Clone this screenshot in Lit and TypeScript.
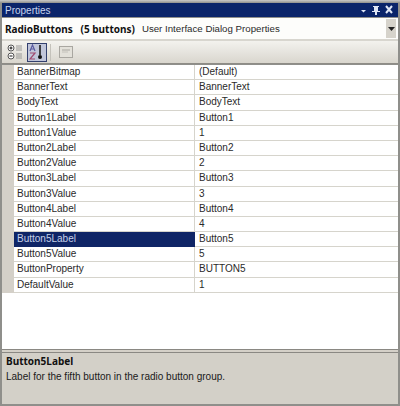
import { LitElement, html, css, svg } from "lit";
import { customElement } from "lit/decorators.js";

const rows: [string, string][] = [
  ["BannerBitmap", "(Default)"],
  ["BannerText", "BannerText"],
  ["BodyText", "BodyText"],
  ["Button1Label", "Button1"],
  ["Button1Value", "1"],
  ["Button2Label", "Button2"],
  ["Button2Value", "2"],
  ["Button3Label", "Button3"],
  ["Button3Value", "3"],
  ["Button4Label", "Button4"],
  ["Button4Value", "4"],
  ["Button5Label", "Button5"],
  ["Button5Value", "5"],
  ["ButtonProperty", "BUTTON5"],
  ["DefaultValue", "1"],
];

@customElement("app-root")
export class AppRoot extends LitElement {
  static styles = css`
    :host {
      display: block;
      width: 400px;
      height: 406px;
      overflow: hidden;
      background: #8f8d88;
      font-family: "Liberation Sans", Arial, sans-serif;
      font-size: 10px;
      color: #2a2a2a;
    }
    .frame {
      height: 406px;
      box-sizing: border-box;
      padding: 3px 2px 2px 2px;
      display: flex;
      flex-direction: column;
      background: linear-gradient(#c9c9c9, #8f8f8b 3px);
    }
    .title {
      height: 14px;
      flex: none;
      background: #0a246a;
      color: #c8d4ee;
      display: flex;
      align-items: center;
      padding: 0 4px 0 3px;
    }
    .title span { flex: 1; }
    .title svg { display: block; }
    .combo {
      height: 23px;
      flex: none;
      background: #fdfdfb;
      border-bottom: 2px solid #d8d6cf;
      box-sizing: border-box;
      margin-top: 1px;
      display: flex;
      align-items: center;
      padding-left: 3px;
      white-space: nowrap;
    }
    .combo b {
      font-family: "Noto Sans", sans-serif;
      font-size: 10px;
      font-weight: 700;
      color: #111;
      margin-right: 7px;
      white-space: pre;
    }
    .combo span { flex: 1; font-size: 9.7px; }
    .drop {
      width: 10px;
      height: 19px;
      background: #d6d3cb;
      display: flex;
      align-items: center;
      justify-content: center;
      margin-right: 2px;
    }
    .toolbar {
      height: 23px;
      flex: none;
      box-sizing: border-box;
      background: linear-gradient(#f3f2ee, #d9d6ce);
      border-bottom: 1px solid #8e8c86;
      display: flex;
      align-items: center;
      gap: 2px;
      padding-left: 3px;
    }
    .tool {
      width: 20px;
      height: 19px;
      display: flex;
      align-items: center;
      justify-content: center;
      box-sizing: border-box;
    }
    .tool.on {
      background: #c1c6da;
      border: 1px solid #33406e;
    }
    .sep {
      width: 1px;
      height: 17px;
      background: #c4c2bb;
      margin: 0 3px 0 1px;
    }
    .body {
      flex: 1;
      background: #fff;
      margin-top: 1px;
      min-height: 0;
    }
    .row {
      height: 15.2px;
      display: grid;
      grid-template-columns: 12px 181px 1fr;
      box-sizing: border-box;
      line-height: 14px;
    }
    .gutter { background: #d4d0c8; }
    .name, .value {
      border-bottom: 1px solid #d6d4cc;
      padding-left: 3px;
      white-space: nowrap;
      overflow: hidden;
    }
    .name { border-right: 1px solid #d6d4cc; }
    .value { padding-left: 4px; }
    .name.sel {
      background: #0f2566;
      color: #c4cfe8;
      border-color: #0f2566;
    }
    .split {
      height: 4px;
      flex: none;
      box-sizing: border-box;
      background: #d4d0c8;
      border-top: 1px solid #8a8883;
      border-bottom: 1px solid #8a8883;
    }
    .desc {
      height: 51px;
      flex: none;
      background: #d3d0c8;
      padding: 1px 4px;
      box-sizing: border-box;
      line-height: 15px;
      color: #1a1a1a;
    }
    .desc b {
      display: block;
      font-family: "Noto Sans", sans-serif;
      font-size: 10px;
      font-weight: 700;
      color: #111;
    }
  `;

  render() {
    return html`
      <div class="frame">
        <div class="title">
          <span>Properties</span>
          <svg width="38" height="12" viewBox="0 0 38 12">
            ${svg`<path d="M5 6h5l-2.500 2.500z" fill="#dfe6f5"/>
            <path d="M17 2h6v1h-1v4h2v1h-3v3h-2V8h-3V7h2V3h-1z" fill="#dfe6f5"/>
            <path d="M30 2l6 7M36 2l-6 7" stroke="#dfe6f5" stroke-width="2" fill="none"/>`}
          </svg>
        </div>
        <div class="combo">
          <b>RadioButtons   (5 buttons)</b>
          <span>User Interface Dialog Properties</span>
          <div class="drop">
            <svg width="7" height="4" viewBox="0 0 7 4"><path d="M0 0h7L3.500 4z" fill="#222"/></svg>
          </div>
        </div>
        <div class="toolbar">
          <div class="tool">
            <svg width="16" height="16" viewBox="0 0 16 16">
              <circle cx="4" cy="4" r="3" fill="#fff" stroke="#555"/>
              <path d="M2.500 4h3M4 2.500v3" stroke="#111"/>
              <circle cx="4" cy="12" r="3" fill="#fff" stroke="#555"/>
              <path d="M2.500 12h3" stroke="#111"/>
              <path d="M9 2h6M9 4h6M9 6h6M9 10h6M9 12h6M9 14h6" stroke="#9a9a98"/>
            </svg>
          </div>
          <div class="tool on">
            <svg width="16" height="16" viewBox="0 0 16 16">
              <path d="M1 7l2.500-6L6 7M2 5h3" stroke="#5a5aa0" fill="none" stroke-width="1.200"/>
              <path d="M1 9h5L1 15h5" stroke="#a04a70" fill="none" stroke-width="1.200"/>
              <path d="M11 1v10" stroke="#111" stroke-width="1.500"/>
              <circle cx="11" cy="13" r="2" fill="#111"/>
            </svg>
          </div>
          <div class="sep"></div>
          <div class="tool">
            <svg width="16" height="16" viewBox="0 0 16 16">
              <rect x="1.500" y="2.500" width="13" height="11" fill="#e3e1da" stroke="#a9a7a1"/>
              <path d="M4 6h8" stroke="#a9a7a1"/>
              <path d="M4 8h6" stroke="#c4c2bb"/>
            </svg>
          </div>
        </div>
        <div class="body">
          ${rows.map(
            ([n, v]) => html`<div class="row">
              <div class="gutter"></div>
              <div class="name ${n === "Button5Label" ? "sel" : ""}">${n}</div>
              <div class="value">${v}</div>
            </div>`
          )}
        </div>
        <div class="split"></div>
        <div class="desc">
          <b>Button5Label</b>
          Label for the fifth button in the radio button group.
        </div>
      </div>
    `;
  }
}
